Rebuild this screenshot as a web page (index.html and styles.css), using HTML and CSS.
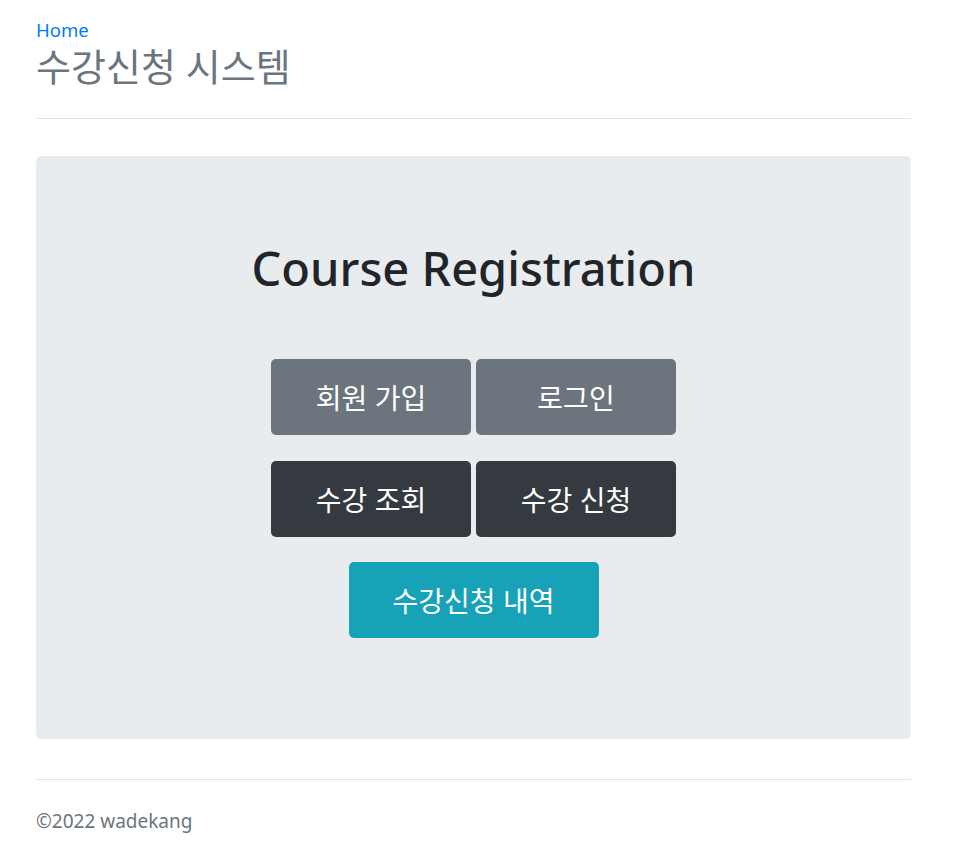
FILE: index.html
```html
<!DOCTYPE html>
<html lang="ko">
<head>
<meta charset="utf-8">
<title>수강신청 시스템</title>
<link rel="stylesheet" href="styles.css">
</head>
<body>
<div class="container">
  <header class="header">
    <a class="home" href="#">Home</a>
    <h2 class="title">수강신청 시스템</h2>
  </header>
  <hr class="rule">
  <main class="jumbotron">
    <h1 class="heading">Course Registration</h1>
    <div class="btn-row">
      <a class="btn btn-secondary" href="#">회원 가입</a>
      <a class="btn btn-secondary" href="#">로그인</a>
    </div>
    <div class="btn-row">
      <a class="btn btn-dark" href="#">수강 조회</a>
      <a class="btn btn-dark" href="#">수강 신청</a>
    </div>
    <div class="btn-row">
      <a class="btn btn-info btn-wide" href="#">수강신청 내역</a>
    </div>
  </main>
  <hr class="rule rule-footer">
  <footer class="footer">©2022 wadekang</footer>
</div>
</body>
</html>
```
FILE: styles.css
```css
* { box-sizing: border-box; }
html, body { margin: 0; padding: 0; background: #fff; }
body {
  font-family: "Noto Sans", "Noto Sans CJK KR", sans-serif;
  color: #212529;
}
.container {
  width: 875px;
  margin-left: 36px;
  padding-top: 17px;
}
.header { display: flex; flex-direction: column; }
.home {
  color: #007bff;
  text-decoration: none;
  font-size: 18.5px;
  line-height: 26px;
}
.title {
  margin: 0;
  font-weight: 400;
  font-size: 38px;
  line-height: 46px;
  color: #6c757d;
}
.rule {
  margin: 29px 0 0;
  border: 0;
  border-top: 1px solid #e2e4e6;
}
.jumbotron {
  margin-top: 37px;
  background: #e9ecef;
  border-radius: 5px;
  height: 583px;
  padding-top: 80px;
  display: flex;
  flex-direction: column;
  align-items: center;
}
.heading {
  margin: 0 0 59px;
  font-size: 47px;
  line-height: 64px;
  font-weight: 500;
}
.btn-row {
  display: flex;
  gap: 5px;
  margin-bottom: 25.5px;
}
.btn {
  display: flex;
  align-items: center;
  justify-content: center;
  width: 200px;
  height: 76px;
  border-radius: 5px;
  color: #fff;
  text-decoration: none;
  font-size: 28px;
}
.btn-secondary { background: #6c757d; }
.btn-dark { background: #343a40; }
.btn-info { background: #17a2b8; }
.btn-wide { width: 250px; }
.rule-footer { margin-top: 40px; }
.footer {
  margin-top: 28px;
  font-size: 19px;
  color: #6c757d;
}
```
